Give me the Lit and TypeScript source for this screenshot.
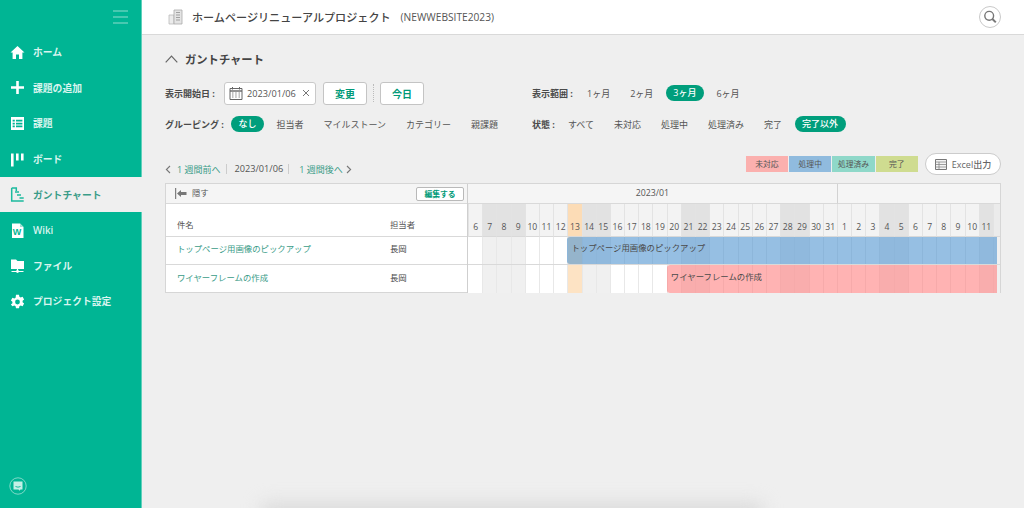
import { LitElement, html, css, svg } from "lit";
import { customElement } from "lit/decorators.js";

const icons: Record<string, unknown> = {
  home: svg`<path d="M7.5 1 L0.5 7.6 L2.6 7.6 L2.6 14 L6 14 L6 9.6 L9 9.6 L9 14 L12.4 14 L12.4 7.6 L14.5 7.6 Z" fill="#fff"/>`,
  plus: svg`<path d="M6.2 1h2.6v5.2H14v2.6H8.8V14H6.2V8.8H1V6.2h5.2z" fill="#fff"/>`,
  list: svg`<path fill-rule="evenodd" d="M1 1h13v13H1z M2.6 3.8h2.2v1.7H2.6z M6 3.8h6.4v1.7H6z M2.6 6.7h2.2v1.7H2.6z M6 6.7h6.4v1.7H6z M2.6 9.6h2.2v1.7H2.6z M6 9.6h6.4v1.7H6z" fill="#fff"/>`,
  board: svg`<path d="M1 1.5h2.6v13H1z M6 1.5h2.6v7H6z M11 1.5h2.6v7H11z" fill="#fff"/>`,
  gantt: svg`<path d="M1.7 1v13h12 M1.7 1h4.6v3 M5 5h4 M7 8h4 M9.5 11h4.2" fill="none" stroke="#1cbb9e" stroke-width="1.5"/>`,
  wiki: svg`<path d="M2 0.5h8l3.5 3.5v11H2z" fill="#fff"/><path d="M10 0.5V4h3.5z" fill="#9fe0d2"/><text x="2.8" y="12.4" font-size="9" font-weight="700" font-family="Liberation Sans" fill="#00b594">W</text>`,
  file: svg`<path d="M1 1.5h5l1.5 1.5H14v8H1z" fill="#fff"/><path d="M7.5 11v2.5 M1.5 13.5h12" stroke="#fff" stroke-width="1.2"/><circle cx="7.5" cy="13.5" r="1.4" fill="#fff"/>`,
  gear: svg`<path fill-rule="evenodd" d="M6 .8h3l.4 2 1.3.7 1.9-.7 1.5 2.7-1.5 1.3v1.5l1.5 1.3-1.5 2.7-1.9-.7-1.3.7-.4 2H6l-.4-2-1.3-.7-1.9.7L.9 10.6l1.5-1.3V7.8L.9 6.5l1.5-2.7 1.9.7 1.3-.7z M7.5 5.6a2.4 2.4 0 1 0 0 4.8 2.4 2.4 0 0 0 0-4.8z" fill="#fff"/>`,
};

const nav = [
  { icon: "home", label: "ホーム" },
  { icon: "plus", label: "課題の追加" },
  { icon: "list", label: "課題" },
  { icon: "board", label: "ボード" },
  { icon: "gantt", label: "ガントチャート", active: true },
  { icon: "wiki", label: "Wiki" },
  { icon: "file", label: "ファイル" },
  { icon: "gear", label: "プロジェクト設定" },
];

const days = [
  ...Array.from({ length: 26 }, (_, i) => i + 6),
  ...Array.from({ length: 11 }, (_, i) => i + 1),
  "",
];
const shaded = [1, 2, 3, 8, 9, 15, 16, 22, 23, 29, 30, 36];
const todayCol = 7;

const cellClass = (i: number) =>
  i === todayCol ? "cell today" : shaded.includes(i) ? "cell off" : i === 37 ? "cell last" : "cell";

const rows = [
  { name: "トップページ用画像のピックアップ", who: "長岡", start: 7, status: "blue" },
  { name: "ワイヤーフレームの作成", who: "長岡", start: 14, status: "red" },
];

@customElement("app-root")
export class AppRoot extends LitElement {
  static styles = css`
    :host {
      display: block;
      width: 1024px;
      height: 508px;
      overflow: hidden;
      font-family: "Open Sans", "Noto Sans CJK JP", sans-serif;
      color: #444;
      background: #efefef;
    }
    .shell {
      display: flex;
      height: 100%;
      position: relative;
    }
    aside {
      width: 142px;
      flex: none;
      background: #00b594;
      border-right: 1px solid #5fd0bb;
      box-sizing: border-box;
      display: flex;
      flex-direction: column;
    }
    .burger {
      height: 34.5px;
      display: flex;
      justify-content: flex-end;
      padding: 10px 13px 0 0;
      box-sizing: border-box;
    }
    .nav-item {
      height: 35.6px;
      display: flex;
      align-items: center;
      gap: 8px;
      padding-left: 10px;
      color: #d8f4ee;
      font-size: 9.8px;
      font-weight: 600;
    }
    .nav-item svg {
      width: 15px;
      height: 15px;
      flex: none;
    }
    .nav-item.active {
      background: #efefef;
      color: #3a9c88;
      font-weight: 700;
      margin-right: -1px;
    }
    .chat {
      margin: auto 0 13px 9px;
      width: 18px;
      height: 18px;
    }
    main {
      flex: 1;
      min-width: 0;
      display: flex;
      flex-direction: column;
    }
    header {
      height: 34px;
      flex: none;
      background: #fff;
      border-bottom: 1px solid #d9d9d9;
      display: flex;
      align-items: center;
      padding: 0 23px 0 26px;
      font-size: 11.1px;
      font-weight: 500;
      color: #444;
    }
    header .building {
      width: 15px;
      height: 16px;
      margin-right: 9px;
    }
    header small {
      font-size: 10.2px;
      font-weight: 500;
      margin-left: 10px;
      color: #555;
    }
    header .search {
      margin-left: auto;
      width: 22px;
      height: 22px;
    }
    .content {
      padding: 14px 23px 0 23px;
    }
    .title {
      height: 20px;
      display: flex;
      align-items: center;
      gap: 7px;
      font-size: 11.3px;
      font-weight: 700;
      color: #444;
    }
    .filters {
      margin-top: 12px;
      display: grid;
      grid-template-columns: 367px 1fr;
      grid-auto-rows: 24px;
      row-gap: 7px;
      font-size: 9px;
    }
    .filter {
      display: flex;
      align-items: center;
      white-space: nowrap;
    }
    .label {
      font-weight: 700;
      color: #4a4a4a;
      flex: none;
    }
    .w-date { width: 59px; }
    .w-group { width: 63.5px; }
    .w-range { width: 45px; }
    .w-state { width: 26px; }
    .datebox {
      width: 92px;
      height: 23px;
      box-sizing: border-box;
      background: #fff;
      border: 1px solid #c9c9c9;
      border-radius: 3px;
      display: flex;
      align-items: center;
      padding-left: 4px;
      color: #555;
      font-size: 9.2px;
    }
    .datebox svg { margin-right: 4px; flex: none; }
    .datebox .clear { margin-left: 6px; margin-right: 0; }
    .btn {
      height: 23px;
      width: 44px;
      box-sizing: border-box;
      background: #fff;
      border: 1.5px solid #c4c4c4;
      border-radius: 3px;
      display: flex;
      align-items: center;
      justify-content: center;
      color: #009a78;
      font-weight: 700;
      font-size: 10px;
      margin-left: 7px;
    }
    .dots {
      height: 18px;
      border-left: 1px dotted #bbb;
      margin: 0 0 0 6px;
    }
    .dots + .btn { margin-left: 6px; }
    .opt {
      padding: 0 10px;
      color: #555;
    }
    .opt.on {
      background: #009e7c;
      color: #fff;
      border-radius: 8px;
      height: 16px;
      line-height: 16px;
      padding: 0 7.5px;
      margin: 0 2.5px;
      font-weight: 500;
    }
    .toolbar {
      margin-top: 17px;
      height: 22px;
      display: flex;
      align-items: center;
      font-size: 9px;
    }
    .pager {
      display: flex;
      align-items: center;
      margin: 10px 0 0 0;
      color: #3a9c88;
    }
    .pager .date {
      color: #555;
      font-size: 9.2px;
      border-left: 1px solid #ccc;
      border-right: 1px solid #ccc;
      padding: 0 5px 0 7px;
      margin: 0 10px 0 6px;
      line-height: 10px;
    }
    .pager svg { flex: none; }
    .pager .prev { margin-right: 6px; }
    .pager .next { margin-left: 3px; }
    .legend {
      margin-left: auto;
      display: flex;
      gap: 1px;
      font-size: 7.8px;
      color: #555;
    }
    .legend span {
      width: 42.3px;
      height: 16px;
      line-height: 16px;
      text-align: center;
    }
    .excel {
      margin-left: 7px;
      width: 76px;
      height: 22px;
      box-sizing: border-box;
      border: 1px solid #ccc;
      border-radius: 11px;
      background: #fff;
      display: flex;
      align-items: center;
      justify-content: center;
      gap: 5px;
      font-size: 9px;
      font-weight: 500;
      color: #666;
    }
    .table {
      margin: 8px 0 0 0;
      display: grid;
      grid-template-columns: 302px 1fr;
      background: #fff;
      border: 1px solid #d6d6d6;
      height: 110px;
      box-sizing: border-box;
      font-size: 8.4px;
    }
    .left {
      border-right: 1px solid #cfcfcf;
      display: grid;
      grid-template-rows: 20px 33px 28px 28px;
    }
    .hidebar {
      background: #f5f5f5;
      border-bottom: 1.5px solid #d9d9d9;
      display: flex;
      align-items: center;
      padding: 0 3px 0 9px;
      color: #555;
      gap: 5px;
    }
    .hidebar span { margin-top: -3px; }
    .edit {
      margin-left: auto;
      width: 48px;
      height: 14px;
      box-sizing: border-box;
      background: #fff;
      border: 1px solid #b9b9b9;
      border-radius: 2px;
      color: #009a78;
      font-size: 7.8px;
      font-weight: 700;
      text-align: center;
      line-height: 12px;
    }
    .tr {
      display: grid;
      grid-template-columns: 213px 1fr;
      padding: 0 0 5px 11px;
      align-items: center;
      border-bottom: 1px solid #d9d9d9;
    }
    .tr:last-child { border-bottom: 0; }
    .tr.head {
      align-items: end;
      padding-bottom: 6px;
      color: #555;
    }
    .tr a { color: #3a9c88; }
    .chart {
      display: grid;
      grid-template-columns: repeat(37, 14.2px) 1fr;
      grid-template-rows: 20px 33px 28px 28px;
      min-width: 0;
    }
    .month {
      grid-column: span 26;
      background: #f5f5f5;
      border-bottom: 1px solid #d9d9d9;
      text-align: center;
      line-height: 19px;
      font-size: 8.8px;
      color: #555;
    }
    .month + .month {
      grid-column: span 12;
      border-left: 1px solid #d2d2d2;
    }
    .day {
      background: #f3f3f3;
      border-left: 1px solid #e3e3e3;
      border-bottom: 1px solid #d9d9d9;
      text-align: center;
      font-size: 8.6px;
      color: #555;
      padding-top: 17px;
      box-sizing: border-box;
      overflow: hidden;
    }
    .day.off { background: #e2e2e2; }
    .day.today { background: #fcdcb6; }
    .day.last { background: #ebebeb; }
    .lane {
      grid-column: 1 / -1;
      display: grid;
      grid-template-columns: subgrid;
      position: relative;
      border-bottom: 1px solid #d9d9d9;
    }
    .lane:last-child { border-bottom: 0; }
    .cell { background: #fff; border-left: 1px solid #e8e8e8; }
    .cell:first-child { border-left: 0; }
    .cell.off { background: #f0f0f0; }
    .cell.today { background: #fde3c4; }
    .cell.last { background: #f0f0f0; }
    .bar {
      position: absolute;
      top: 0;
      bottom: 0;
      right: 3px;
      border-radius: 3px 0 0 3px;
      display: flex;
      align-items: center;
      padding: 0 0 7px 4px;
      box-sizing: border-box;
      color: #4a4a4a;
      white-space: nowrap;
    }
    .bar.blue { background: rgba(80, 148, 208, 0.6); }
    .bar.red { background: rgba(255, 128, 128, 0.6); }
    .legend .red { background: #fbb0ae; }
    .legend .blue { background: #90bbde; }
    .legend .teal { background: #8fd8c9; }
    .legend .green { background: #cfdc90; }
    .shadow {
      position: absolute;
      left: 262px;
      right: 262px;
      bottom: -14px;
      height: 18px;
      background: #d8d8d8;
      filter: blur(9px);
    }
  `;

  render() {
    return html`<div class="shell">
      <aside>
        <div class="burger">
          <svg width="15" height="15" viewBox="0 0 15 15">
            <path d="M0 1h15M0 7h15M0 13h15" stroke="#8fdccd" stroke-width="1"/>
          </svg>
        </div>
        ${nav.map(
          (n) => html`<div class="nav-item ${n.active ? "active" : ""}">
            <svg viewBox="0 0 15 15">${icons[n.icon]}</svg><span>${n.label}</span>
          </div>`
        )}
        <svg class="chat" viewBox="0 0 18 18">
          <circle cx="9" cy="9" r="8.2" fill="none" stroke="#7fd9c8" stroke-width="1"/>
          <path d="M4.5 4.5h9v8h-2l-1 1.2-1-1.2h-5z" fill="#c4efe6"/>
          <path d="M6.5 9.5q2.5 1.4 5 0" fill="none" stroke="#00b594" stroke-width="0.9"/>
        </svg>
      </aside>
      <main>
        <header>
          <svg class="building" viewBox="0 0 15 16">
            <path d="M1 6h5v9H1z" fill="#ececec" stroke="#bbb" stroke-width="0.8"/>
            <path d="M6 1h8v14H6z" fill="#e4e4e4" stroke="#aaa" stroke-width="0.8"/>
            <path d="M8 3.5h4M8 6h4M8 8.5h4M8 11h4" stroke="#999" stroke-width="0.9"/>
          </svg>
          <span>ホームページリニューアルプロジェクト</span>
          <small>(NEWWEBSITE2023)</small>
          <svg class="search" viewBox="0 0 22 22">
            <circle cx="11" cy="11" r="10.5" fill="#fff" stroke="#c9c9c9"/>
            <circle cx="10.2" cy="9.8" r="4.4" fill="none" stroke="#777" stroke-width="1.4"/>
            <path d="M13.4 13l3.4 3.4" stroke="#777" stroke-width="2"/>
          </svg>
        </header>
        <div class="content">
          <div class="title">
            <svg width="13" height="8" viewBox="0 0 13 8">
              <path d="M0.7 7.3L6.5 1.2l5.8 6.1" fill="none" stroke="#666" stroke-width="1.2"/>
            </svg>
            ガントチャート
          </div>
          <div class="filters">
            <div class="filter">
              <span class="label w-date">表示開始日 :</span>
              <div class="datebox">
                <svg width="14" height="14" viewBox="0 0 14 14">
                  <path d="M1 2.5h12v11H1z" fill="none" stroke="#666"/>
                  <path d="M1 5h12" stroke="#666" stroke-width="1.4"/>
                  <path d="M3.5 1v2.5M10.5 1v2.5" stroke="#666"/>
                  <path d="M3 7h1.5M6.2 7h1.5M9.5 7h1.5M3 9h1.5M6.2 9h1.5M9.5 9h1.5M3 11h1.5M6.2 11h1.5M9.5 11h1.5" stroke="#888"/>
                </svg>
                2023/01/06
                <svg class="clear" width="8" height="8" viewBox="0 0 8 8">
                  <path d="M1 1l6 6M7 1L1 7" stroke="#777"/>
                </svg>
              </div>
              <div class="btn">変更</div>
              <div class="dots"></div>
              <div class="btn">今日</div>
            </div>
            <div class="filter">
              <span class="label w-range">表示範囲 :</span>
              <span class="opt">1ヶ月</span>
              <span class="opt">2ヶ月</span>
              <span class="opt on">3ヶ月</span>
              <span class="opt">6ヶ月</span>
            </div>
            <div class="filter">
              <span class="label w-group">グルーピング :</span>
              <span class="opt on">なし</span>
              <span class="opt">担当者</span>
              <span class="opt">マイルストーン</span>
              <span class="opt">カテゴリー</span>
              <span class="opt">親課題</span>
            </div>
            <div class="filter">
              <span class="label w-state">状態 :</span>
              <span class="opt">すべて</span>
              <span class="opt">未対応</span>
              <span class="opt">処理中</span>
              <span class="opt">処理済み</span>
              <span class="opt">完了</span>
              <span class="opt on">完了以外</span>
            </div>
          </div>
          <div class="toolbar">
            <div class="pager">
              <svg class="prev" width="6" height="9" viewBox="0 0 6 9"><path d="M5 1L1.4 4.5 5 8" fill="none" stroke="#777" stroke-width="1.1"/></svg>
              <span>1 週間前へ</span>
              <span class="date">2023/01/06</span>
              <span>1 週間後へ</span>
              <svg class="next" width="6" height="9" viewBox="0 0 6 9"><path d="M1 1l3.6 3.5L1 8" fill="none" stroke="#777" stroke-width="1.1"/></svg>
            </div>
            <div class="legend">
              <span class="red">未対応</span>
              <span class="blue">処理中</span>
              <span class="teal">処理済み</span>
              <span class="green">完了</span>
            </div>
            <div class="excel">
              <svg width="12" height="11" viewBox="0 0 12 11">
                <path d="M.5.5h11v10H.5z" fill="#f4f4f4" stroke="#777"/>
                <path d="M.5 3h11M.5 5.5h11M.5 8h11M4 3v7.5" stroke="#888" stroke-width="0.8"/>
              </svg>
              Excel出力
            </div>
          </div>
          <div class="table">
            <div class="left">
              <div class="hidebar">
                <svg width="12" height="11" viewBox="0 0 12 11">
                  <path d="M.7 0v11" stroke="#666" stroke-width="1"/>
                  <path d="M2 5.5L6 2v2h5.5v3H6v2z" fill="#777"/>
                </svg>
                <span>隠す</span>
                <div class="edit">編集する</div>
              </div>
              <div class="tr head"><span>件名</span><span>担当者</span></div>
              ${rows.map(
                (r) => html`<div class="tr"><a>${r.name}</a><span>${r.who}</span></div>`
              )}
            </div>
            <div class="chart">
              <div class="month">2023/01</div>
              <div class="month"></div>
              ${days.map(
                (d, i) => html`<div class=${cellClass(i).replace("cell", "day")}>${d}</div>`
              )}
              ${rows.map(
                (r) => html`<div class="lane">
                  ${days.map((_, i) => html`<div class=${cellClass(i)}></div>`)}
                  <div class="bar ${r.status}" style="left:${r.start * 14.2}px">
                    ${r.name}
                  </div>
                </div>`
              )}
            </div>
          </div>
        </div>
      </main>
      <div class="shadow"></div>
    </div>`;
  }
}
